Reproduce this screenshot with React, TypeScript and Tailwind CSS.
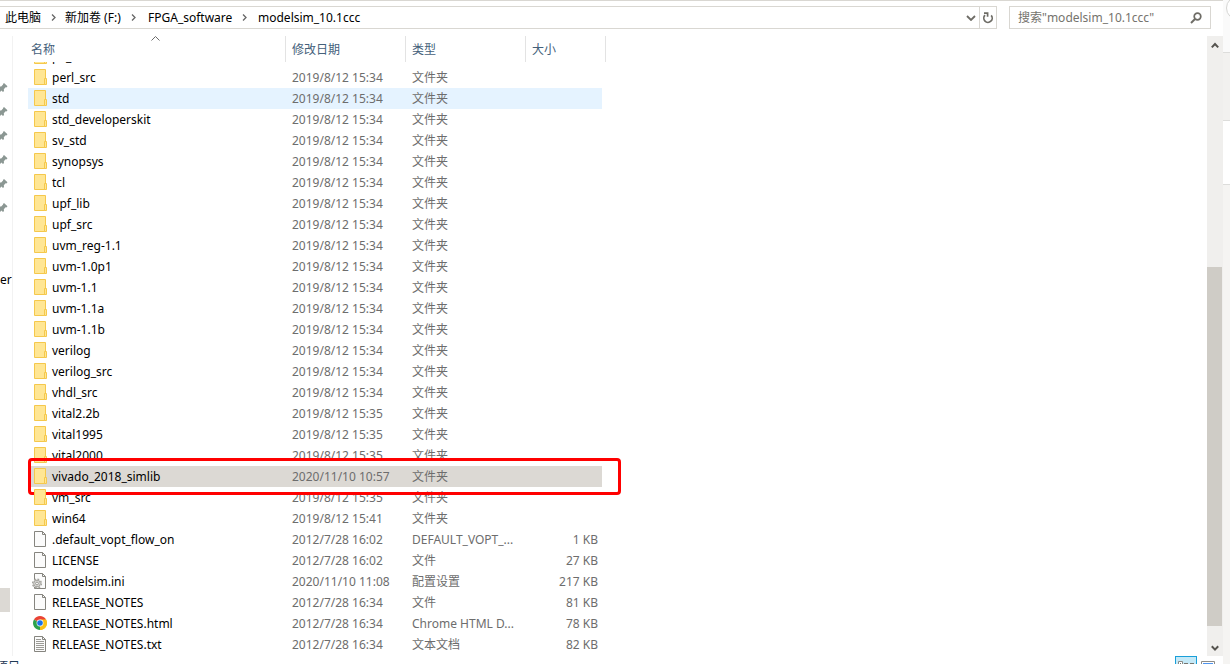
import { ReactNode } from "react";

type Kind = "folder" | "file" | "ini" | "chrome" | "text";

type Entry = {
  name: string;
  date: string;
  type: string;
  size?: string;
  kind?: Kind;
  state?: "hover" | "selected";
};

const folder = (name: string, date = "2019/8/12 15:34"): Entry => ({ name, date, type: "文件夹" });

const entries: Entry[] = [
  folder("perl_src"),
  { ...folder("std"), state: "hover" },
  folder("std_developerskit"),
  folder("sv_std"),
  folder("synopsys"),
  folder("tcl"),
  folder("upf_lib"),
  folder("upf_src"),
  folder("uvm_reg-1.1"),
  folder("uvm-1.0p1"),
  folder("uvm-1.1"),
  folder("uvm-1.1a"),
  folder("uvm-1.1b"),
  folder("verilog"),
  folder("verilog_src"),
  folder("vhdl_src"),
  folder("vital2.2b", "2019/8/12 15:35"),
  folder("vital1995", "2019/8/12 15:35"),
  folder("vital2000", "2019/8/12 15:35"),
  { ...folder("vivado_2018_simlib", "2020/11/10 10:57"), state: "selected" },
  folder("vm_src", "2019/8/12 15:35"),
  folder("win64", "2019/8/12 15:41"),
  { name: ".default_vopt_flow_on", date: "2012/7/28 16:02", type: "DEFAULT_VOPT_...", size: "1 KB", kind: "file" },
  { name: "LICENSE", date: "2012/7/28 16:02", type: "文件", size: "27 KB", kind: "file" },
  { name: "modelsim.ini", date: "2020/11/10 11:08", type: "配置设置", size: "217 KB", kind: "ini" },
  { name: "RELEASE_NOTES", date: "2012/7/28 16:34", type: "文件", size: "81 KB", kind: "file" },
  { name: "RELEASE_NOTES.html", date: "2012/7/28 16:34", type: "Chrome HTML D...", size: "78 KB", kind: "chrome" },
  { name: "RELEASE_NOTES.txt", date: "2012/7/28 16:34", type: "文本文档", size: "82 KB", kind: "text" },
];

const rowColor = {
  hover: "bg-[#e5f3ff]",
  selected: "bg-[#dcd9d4]",
};

const FolderIcon = () => (
  <svg width="16" height="16" viewBox="0 0 16 16" className="mb-px shrink-0">
    <path d="M2.5.5h11v15h-11z" fill="#ffe694" stroke="#f5c84c" />
    <path d="M12.5 9.5h2v6h-2z" fill="#ffe694" stroke="#f5c84c" />
  </svg>
);

const FileIcon = ({ children }: { children?: ReactNode }) => (
  <svg width="16" height="16" viewBox="0 0 16 16" className="mb-px shrink-0">
    <path d="M2.5.5h8l3 3v12h-11z" fill="#fbfbfb" stroke="#86857f" />
    <path d="M10.5.5v3h3" fill="none" stroke="#86857f" />
    {children}
  </svg>
);

const ChromeIcon = () => (
  <svg width="16" height="16" viewBox="0 0 16 16" className="mb-px shrink-0">
    <path d="M8 8 1.94 4.5A7 7 0 0 1 14.06 4.5z" fill="#ea4335" />
    <path d="M8 8 14.06 4.5A7 7 0 0 1 8 15z" fill="#fbc116" />
    <path d="M8 8v7A7 7 0 0 1 1.94 4.5z" fill="#2ba24c" />
    <path d="M8 4.5h6.06A7 7 0 0 1 8 15l3-5.2z" fill="#fbc116" />
    <circle cx="8" cy="8" r="3.4" fill="#fff" />
    <circle cx="8" cy="8" r="2.8" fill="#1a73e8" />
  </svg>
);

const EntryIcon = ({ kind = "folder" }: { kind?: Kind }) => {
  if (kind === "folder") return <FolderIcon />;
  if (kind === "chrome") return <ChromeIcon />;
  if (kind === "text") {
    return (
      <FileIcon>
        <path d="M4 3.5h5M4 5.5h8M4 7.5h8M4 9.5h8M4 11.5h8M4 13.5h8" stroke="#9c9b96" />
      </FileIcon>
    );
  }
  if (kind === "ini") {
    return (
      <FileIcon>
        <circle cx="5" cy="10.5" r="4.4" fill="#e8e8e6" stroke="#a3a29d" strokeWidth="1.4" strokeDasharray="1.8 1.65" />
        <circle cx="5" cy="10.5" r="3.3" fill="#dededc" stroke="#a3a29d" />
        <circle cx="5" cy="10.5" r="1.4" fill="#fff" stroke="#96958f" />
      </FileIcon>
    );
  }
  return <FileIcon />;
};

const PinIcon = () => (
  <svg width="8" height="10" viewBox="0 0 8 10" className="block">
    <path d="M4 0 7.5 3.3 6.4 4.4 5.6 4.2 3.8 6.3 4 8 3 9 1.5 7.6 0 9V3.6L1.2 3.4 3.1 1.6 3 1z" fill="#8b9793" />
  </svg>
);

const Chevron = () => (
  <svg width="5" height="7" viewBox="0 0 5 7" className="shrink-0">
    <path d="M1 .5l3 3-3 3" fill="none" stroke="#666" strokeWidth="1.3" />
  </svg>
);

const AddressBar = () => (
  <header className="mt-[5px] flex h-[23px] gap-3 pr-3">
    <nav className="flex flex-1 items-center border border-l-0 border-[#d9d7d2]">
      <ol className="flex flex-1 items-center pl-[5px] text-black">
        <li className="flex w-[60px] items-center gap-[10px] whitespace-nowrap"><a href="#pc">此电脑</a><Chevron /></li>
        <li className="flex w-[83px] items-center gap-[10px] whitespace-nowrap"><a href="#f">新加卷 (F:)</a><Chevron /></li>
        <li className="flex w-[110px] items-center gap-[10px] whitespace-nowrap"><a href="#fpga">FPGA_software</a><Chevron /></li>
        <li><a href="#modelsim">modelsim_10.1ccc</a></li>
      </ol>
      <button aria-label="Recent locations" className="flex h-full w-4 items-center justify-center">
        <svg width="10" height="6" viewBox="0 0 10 6"><path d="M1 1l4 4 4-4" fill="none" stroke="#6e6c66" strokeWidth="1.8" /></svg>
      </button>
      <button aria-label="Refresh" className="flex h-full w-[17px] items-center justify-center border-l border-[#d9d7d2]">
        <svg width="12" height="12" viewBox="0 0 12 12" fill="none" stroke="#6e6c66" strokeWidth="1.7">
          <path d="M3 3.2A4.2 4.2 0 1 0 9.2 3.4" />
          <path d="M2 1.2h3.6v3.6" />
        </svg>
      </button>
    </nav>
    <label className="flex w-[202px] items-center border border-[#d9d7d2] pr-2 pl-2">
      <input
        type="search"
        aria-label="Search"
        placeholder={'搜索"modelsim_10.1ccc"'}
        className="min-w-0 flex-1 outline-none placeholder:text-[#75736d]"
      />
      <svg width="12" height="12" viewBox="0 0 12 12" fill="none" stroke="#6e6c66">
        <circle cx="7.5" cy="4.5" r="3.3" strokeWidth="1.7" />
        <path d="M5 7 1 11" strokeWidth="2" />
      </svg>
    </label>
  </header>
);

const Sidebar = () => (
  <aside className="flex w-[13px] shrink-0 flex-col overflow-hidden border-r border-[#f2f2f2] pt-[47px]">
    <div className="flex flex-col gap-[14px]">
      {[1, 2, 3, 4, 5, 6].map((pin) => (
        <PinIcon key={pin} />
      ))}
    </div>
    <span className="mt-[59px] leading-4 text-black">er</span>
    <div className="mt-[300px] h-6 w-[10px] shrink-0 bg-[#dcd9d4]" />
  </aside>
);

const Row = ({ entry }: { entry: Entry }) => {
  const color = entry.state ? rowColor[entry.state] : "";
  return (
    <tr className="h-[21px] whitespace-nowrap text-[#6d6d6d]">
      <td className={`relative py-0 pr-0 pl-1 text-black ${color}`}>
        <div className="flex items-center gap-1">
          <EntryIcon kind={entry.kind} />
          {entry.name}
        </div>
        {entry.state === "selected" && (
          <div className="absolute -top-2 left-0 h-[37px] w-[593px] rounded-sm border-3 border-[#ff0000]" />
        )}
      </td>
      <td className={`py-0 pr-0 pl-[7px] ${color}`}>{entry.date}</td>
      <td className={`py-0 pr-0 pl-[7px] ${color}`}>{entry.type}</td>
      <td className={`py-0 pr-1 pl-0 text-right ${color}`}>{entry.size}</td>
      <td />
    </tr>
  );
};

const FileTable = () => (
  <table className="w-[578px] table-fixed border-collapse leading-4">
    <colgroup>
      <col className="w-[257px]" />
      <col className="w-[120px]" />
      <col className="w-[120px]" />
      <col className="w-[77px]" />
      <col className="w-1" />
    </colgroup>
    <thead>
      <tr className="h-[26px] text-left text-[#44607a]">
        <th className="relative p-0 font-normal">
          <div className="pt-1.5 pb-1 pl-[3px]">名称</div>
          <svg width="9" height="5" viewBox="0 0 9 5" className="absolute top-0 left-[123px]">
            <path d="M.5 4.5l4-4 4 4" fill="none" stroke="#6b6b6b" />
          </svg>
        </th>
        <th className="p-0 font-normal"><div className="border-l border-[#e3e3e3] pt-1.5 pb-1 pl-[6px]">修改日期</div></th>
        <th className="p-0 font-normal"><div className="border-l border-[#e3e3e3] pt-1.5 pb-1 pl-[6px]">类型</div></th>
        <th colSpan={2} className="p-0 font-normal"><div className="border-x border-[#e3e3e3] pt-1.5 pb-1 pl-[6px]">大小</div></th>
      </tr>
    </thead>
    <tbody>
      {/* row scrolled under the header, only its bottom edge is left */}
      <tr className="text-black">
        <td colSpan={5} className="p-0">
          <div className="flex h-[5px] items-end overflow-hidden pl-1">
            <div className="flex h-[21px] items-center gap-1"><FolderIcon />pa_src</div>
          </div>
        </td>
      </tr>
      {entries.map((entry) => (
        <Row key={entry.name} entry={entry} />
      ))}
    </tbody>
  </table>
);

const Arrow = ({ down = false }: { down?: boolean }) => (
  <svg width="8" height="7" viewBox="0 0 8 7">
    <path d={down ? "M.8 1.2 4 4.6l3.2-3.4" : "M.8 5.4 4 2l3.2 3.4"} fill="none" stroke="#55534e" strokeWidth="2" />
  </svg>
);

const ScrollBar = () => (
  <div className="flex w-4 shrink-0 flex-col bg-[#f0efed]">
    <button aria-label="Scroll up" className="flex h-[18px] items-center justify-center"><Arrow /></button>
    <div className="grow-[213]" />
    <div className="mr-px grow-[359] bg-[#cfccc6]" />
    <div className="grow-[14]" />
    <button aria-label="Scroll down" className="flex h-4 items-center justify-center"><Arrow down /></button>
  </div>
);

const StatusBar = () => (
  <footer className="flex h-2 items-start overflow-hidden pr-2">
    <span className="-ml-1 pt-[3px] leading-4 text-[#1f3a55]">项目</span>
    <div className="ml-auto flex gap-1">
      <button aria-label="Details view" className="flex h-[22px] w-[22px] items-start justify-center border border-[#1a9fd9] bg-[#c5e9f7] pt-1">
        <svg width="16" height="12" viewBox="0 0 16 12">
          <path d="M.5.5h4v11h-4z" fill="#fff" stroke="#8d8b86" />
          <path d="M2.5 2v4M6 2.5h4M12 2.5h4" stroke="#77756f" />
        </svg>
      </button>
      <button aria-label="Large icons" className="flex items-start pt-[5px]">
        <svg width="14" height="12" viewBox="0 0 14 12">
          <path d="M.5.5h13v11h-13z" fill="#fff" stroke="#8d8b86" />
          <path d="M2 2h10v8H2z" fill="#4f94ee" />
        </svg>
      </button>
    </div>
  </footer>
);

// edge of the window that lies behind the explorer
const BackWindow = () => (
  <div className="flex w-[7px] shrink-0 flex-col overflow-hidden bg-[#f5f4f2]">
    <div className="h-[53px] border-b border-[#dddddb] bg-[#fafafa]">
      <div className="-mt-1 ml-[3px] size-6 rounded-full border border-[#d5d5d3] bg-white" />
    </div>
    <div className="h-[68px] border-b border-[#dddddb] bg-[#f2f1ef]" />
    <div className="h-16 border-b border-[#dddddb] bg-white" />
  </div>
);

const App = () => {
  return (
    <div className="flex h-screen overflow-hidden bg-white font-['Noto_Sans','Noto_Sans_CJK_SC',sans-serif] text-xs">
      <main className="flex min-w-0 flex-1 flex-col border-t border-[#d9d7d2]">
        <AddressBar />
        <div className="mt-[7px] flex min-h-0 flex-1">
          <Sidebar />
          <section className="min-w-0 flex-1 overflow-hidden pl-[15px]">
            <FileTable />
          </section>
          <ScrollBar />
        </div>
        <StatusBar />
      </main>
      <BackWindow />
    </div>
  );
};

export default App;
